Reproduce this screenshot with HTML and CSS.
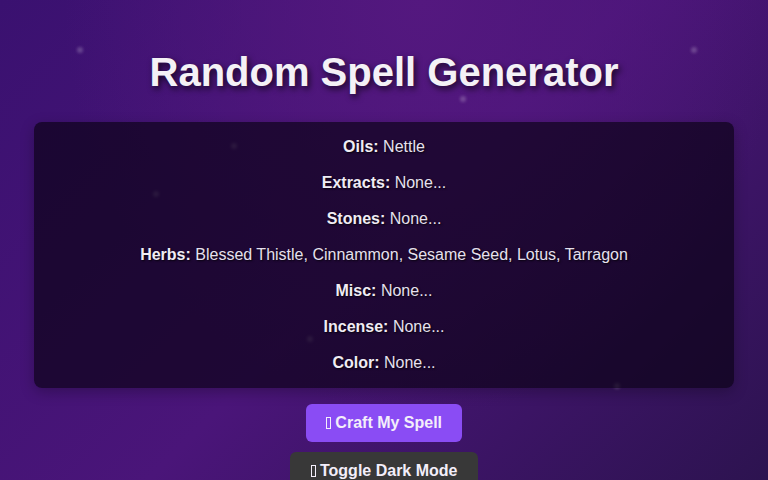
FILE: index.html
```html
<!DOCTYPE html>
<html lang="en">
<head>
  <meta charset="UTF-8" />
  <meta name="viewport" content="width=device-width, initial-scale=1.0"/>
  <title>Random Spell Generator</title>
  <link rel="stylesheet" href="styles.css">
</head>
<body>
  <div class="sparkles">
    <span class="sparkle" style="left:77px;top:47px"></span>
    <span class="sparkle" style="left:691px;top:47px"></span>
    <span class="sparkle" style="left:460px;top:96px"></span>
    <span class="sparkle" style="left:231px;top:143px"></span>
    <span class="sparkle" style="left:153px;top:191px"></span>
    <span class="sparkle" style="left:307px;top:336px"></span>
    <span class="sparkle" style="left:614px;top:383px"></span>
  </div>

  <h1>Random Spell Generator</h1>

  <div class="spell-card" id="spell">
    <p><strong>Oils:</strong> Nettle</p>
    <p><strong>Extracts:</strong> None...</p>
    <p><strong>Stones:</strong> None...</p>
    <p><strong>Herbs:</strong> Blessed Thistle, Cinnammon, Sesame Seed, Lotus, Tarragon</p>
    <p><strong>Misc:</strong> None...</p>
    <p><strong>Incense:</strong> None...</p>
    <p><strong>Color:</strong> None...</p>
  </div>

  <div class="actions">
    <button class="btn craft-btn"><span class="glyph"></span> Craft My Spell</button>
    <button class="btn toggle-btn"><span class="glyph"></span> Toggle Dark Mode</button>
  </div>
</body>
</html>
```

FILE: styles.css
```css
* {
  box-sizing: border-box;
}

body {
  margin: 0;
  min-height: 100vh;
  overflow: hidden;
  font-family: "Liberation Sans", Arial, sans-serif;
  color: #f2eef7;
  background:
    radial-gradient(ellipse at 55% 0%, #54187f 0%, rgba(84, 24, 127, 0) 60%),
    linear-gradient(135deg, #3a1170 0%, #4a1579 50%, #2c134f 100%);
  display: flex;
  flex-direction: column;
  align-items: center;
  padding: 0 34px;
}

.sparkles {
  position: absolute;
  inset: 0;
  pointer-events: none;
}

.sparkle {
  position: absolute;
  width: 6px;
  height: 6px;
  border-radius: 50%;
  background: rgba(255, 255, 255, 0.22);
  filter: blur(1.5px);
}

h1 {
  margin: 50px 0 28px;
  font-size: 40px;
  line-height: 44px;
  color: #f4f1f6;
  text-shadow: 2px 3px 6px rgba(0, 0, 0, 0.7);
  position: relative;
}

.spell-card {
  position: relative;
  width: 100%;
  background: rgba(10, 2, 20, 0.68);
  border-radius: 8px;
  padding: 15px 20px 15px;
  text-align: center;
  box-shadow: 0 4px 14px rgba(0, 0, 0, 0.25);
}

.spell-card p {
  margin: 0 0 16px;
  font-size: 16px;
  line-height: 20px;
  color: #e6e0ee;
  text-shadow: 1px 1px 2px rgba(0, 0, 0, 0.8);
}

.spell-card p:last-child {
  margin-bottom: 0;
}

.spell-card strong {
  color: #f0ecf4;
}

.actions {
  display: flex;
  flex-direction: column;
  align-items: center;
  gap: 10px;
  margin-top: 16px;
  position: relative;
}

.btn {
  font-family: inherit;
  font-size: 16px;
  font-weight: bold;
  color: #f3eefa;
  border: none;
  border-radius: 6px;
  padding: 10px 20px;
  line-height: 18px;
  cursor: pointer;
}

.craft-btn {
  background: #8a4cf4;
}

.toggle-btn {
  background: #383838;
  padding: 10px 21px;
}

.glyph {
  display: inline-block;
  width: 5px;
  height: 12px;
  border: 1px solid currentColor;
  vertical-align: -1px;
}
```
